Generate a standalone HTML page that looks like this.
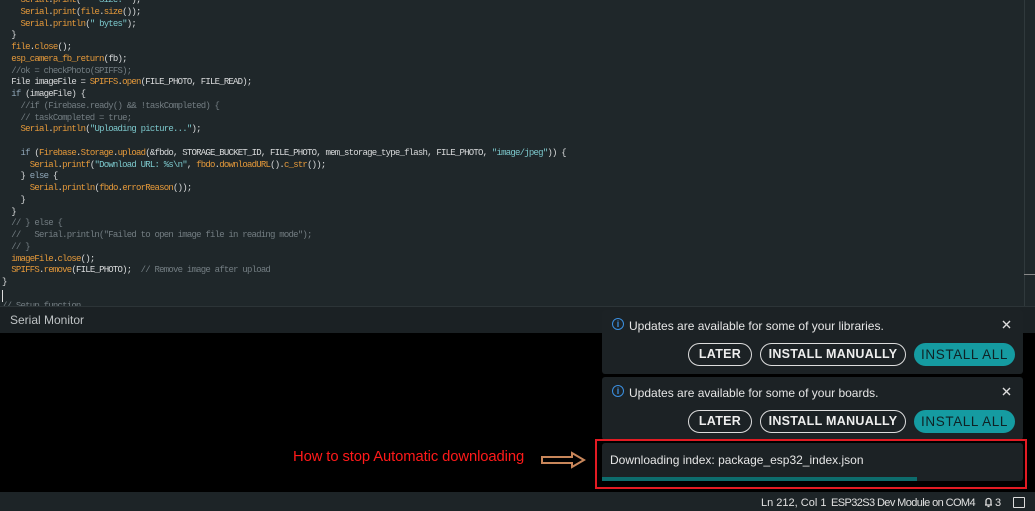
<!DOCTYPE html><html><head><style>
body{margin:0;width:1035px;height:511px;overflow:hidden;background:#000;font-family:"Liberation Sans",sans-serif;position:relative}
#ed{position:absolute;left:0;top:0;width:1035px;height:307px;background:#1f272a}
#code{position:absolute;left:2px;top:-5px;font-family:"Liberation Mono",monospace;font-size:9px;letter-spacing:-0.78px;line-height:11.75px;color:#d8dadb;white-space:pre}
.o{color:#e5993a}.k{color:#8fa6b8}.c{color:#737d82}.s{color:#7cc8cc}
.ab{position:absolute}
.note{position:absolute;left:602px;width:421px;background:#1c2225;border-radius:3px}
.msg{position:absolute;left:27px;top:9px;font-size:12px;color:#e6e6e6}
.info{position:absolute;left:10px;top:8px;width:10px;height:10px;border:1.2px solid #3b8fe0;border-radius:50%;color:#3b8fe0;font-size:9px;font-weight:bold;text-align:center;line-height:10px}
.x{position:absolute;right:12px;top:10px}
.btn{position:absolute;top:33px;height:21px;border:1.5px solid #ddd;border-radius:12px;color:#eee;font-size:12.5px;font-weight:bold;text-align:center;line-height:21px;letter-spacing:.3px}
.ia{background:#159ba1;border-color:#159ba1;color:#0f2225;font-weight:normal;font-size:13.5px;letter-spacing:.6px}
</style></head><body>
<div id="ed"><div id="code"><span class="o">    Serial</span>.<span class="o">print</span>(<span class="s">" - Size: "</span>);
    <span class="o">Serial</span>.<span class="o">print</span>(<span class="o">file</span>.<span class="o">size</span>());
    <span class="o">Serial</span>.<span class="o">println</span>(<span class="s">" bytes"</span>);
  }
  <span class="o">file</span>.<span class="o">close</span>();
  <span class="o">esp_camera_fb_return</span>(fb);
  <span class="c">//ok = checkPhoto(SPIFFS);</span>
  File imageFile = <span class="o">SPIFFS</span>.<span class="o">open</span>(FILE_PHOTO, FILE_READ);
  <span class="k">if</span> (imageFile) {
    <span class="c">//if (Firebase.ready() &amp;&amp; !taskCompleted) {</span>
    <span class="c">// taskCompleted = true;</span>
    <span class="o">Serial</span>.<span class="o">println</span>(<span class="s">"Uploading picture..."</span>);

    <span class="k">if</span> (<span class="o">Firebase</span>.<span class="o">Storage</span>.<span class="o">upload</span>(&amp;fbdo, STORAGE_BUCKET_ID, FILE_PHOTO, mem_storage_type_flash, FILE_PHOTO, <span class="s">"image/jpeg"</span>)) {
      <span class="o">Serial</span>.<span class="o">printf</span>(<span class="s">"Download URL: %s\n"</span>, <span class="o">fbdo</span>.<span class="o">downloadURL</span>().<span class="o">c_str</span>());
    } <span class="k">else</span> {
      <span class="o">Serial</span>.<span class="o">println</span>(<span class="o">fbdo</span>.<span class="o">errorReason</span>());
    }
  }
  <span class="c">// } else {</span>
  <span class="c">//   Serial.println("Failed to open image file in reading mode");</span>
  <span class="c">// }</span>
  <span class="o">imageFile</span>.<span class="o">close</span>();
  <span class="o">SPIFFS</span>.<span class="o">remove</span>(FILE_PHOTO);  <span class="c">// Remove image after upload</span>
}

<span class="c">// Setup function</span></div>
<div class="ab" style="left:1024px;top:0;width:1px;height:307px;background:#30393c"></div>
<div class="ab" style="left:1024px;top:274px;width:11px;height:1px;background:#888"></div>
<div class="ab" style="left:2px;top:290px;width:1px;height:12px;background:#ddd"></div>
</div>
<div class="ab" style="left:0;top:306px;width:1035px;height:1px;background:#2c3437"></div>
<div class="ab" style="left:0;top:307px;width:1035px;height:26px;background:#1b2124"></div>
<div class="ab" style="left:10px;top:313px;font-size:12px;color:#bfc3c5">Serial Monitor</div>
<div class="ab" style="left:0;top:492px;width:1035px;height:19px;background:#1d2427"></div>
<div class="ab" style="left:761px;top:497px;font-size:11px;color:#e0e0e0">Ln 212, Col 1</div>
<div class="ab" style="left:831px;top:497px;font-size:11px;color:#e0e0e0;letter-spacing:-.6px">ESP32S3 Dev Module on COM4</div>
<svg class="ab" style="left:983px;top:496px" width="11" height="12"><path d="M2 9h7M3 9V5a2.5 2.5 0 0 1 5 0v4M4.5 10.5h2" fill="none" stroke="#ddd" stroke-width="1.3"/></svg>
<div class="ab" style="left:995px;top:497px;font-size:11px;color:#e0e0e0">3</div>
<div class="ab" style="left:1013px;top:497px;width:10px;height:9px;border:1.3px solid #ddd;border-radius:1px"></div>
<div class="ab" style="left:293px;top:449px;font-size:14.8px;color:#ff1a1a;letter-spacing:-.1px">How to stop Automatic downloading</div>
<svg class="ab" style="left:540px;top:451px" width="48" height="18"><path d="M2 6h30V2l12 7-12 7v-4H2z" fill="none" stroke="#c8865a" stroke-width="2"/></svg>
<div class="note" style="top:310px;height:64px"><div class="info">i</div><div class="msg">Updates are available for some of your libraries.</div><svg class="x" width="9" height="9"><path d="M1 1l7 7M8 1l-7 7" stroke="#ddd" stroke-width="1.4"/></svg>
<div class="btn" style="left:86px;width:62px">LATER</div><div class="btn" style="left:158px;width:144px">INSTALL MANUALLY</div><div class="btn ia" style="left:312px;width:99px">INSTALL ALL</div></div>
<div class="note" style="top:377px;height:63px"><div class="info">i</div><div class="msg">Updates are available for some of your boards.</div><svg class="x" width="9" height="9"><path d="M1 1l7 7M8 1l-7 7" stroke="#ddd" stroke-width="1.4"/></svg>
<div class="btn" style="left:86px;width:62px">LATER</div><div class="btn" style="left:158px;width:144px">INSTALL MANUALLY</div><div class="btn ia" style="left:312px;width:99px">INSTALL ALL</div></div>
<div class="ab" style="left:595px;top:439px;width:428px;height:46px;border:2px solid #e31b23"></div>
<div class="note" style="top:443px;height:38px"><div class="ab" style="left:8px;top:10px;font-size:12px;color:#e6e6e6">Downloading index: package_esp32_index.json</div><div class="ab" style="left:0;top:34px;width:315px;height:4px;background:#0d6c6c"></div></div>
</body></html>
